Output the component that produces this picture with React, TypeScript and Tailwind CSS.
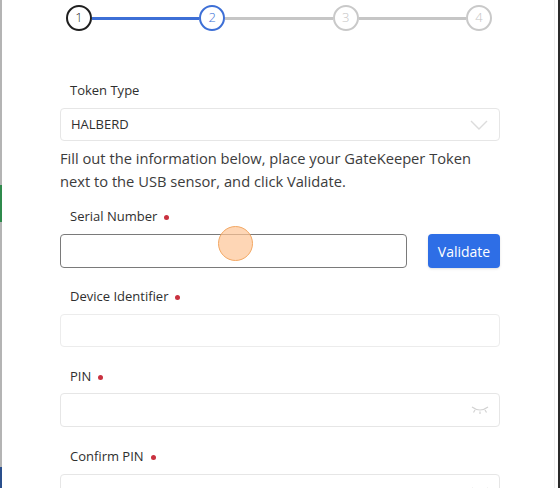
import React from 'react';

const font = { fontFamily: '"Open Sans", "Noto Sans", sans-serif' };

const Step = ({ n, state }: { n: number; state: 'done' | 'active' | 'todo' }) => {
  const ring =
    state === 'done'
      ? 'border-[#1f1f1f] text-[#2a2a2a]'
      : state === 'active'
      ? 'border-[#3d6fd6] text-[#3d6fd6]'
      : 'border-[#c9c9c9] text-[#c4c4c4]';
  return (
    <div
      className={`w-[26px] h-[26px] shrink-0 rounded-full border-2 bg-white flex items-center justify-center text-[13px] font-light ${ring}`}
    >
      {n}
    </div>
  );
};

const Line = ({ blue }: { blue?: boolean }) => (
  <div className={`flex-1 h-[3px] ${blue ? 'bg-[#3d6fd6]' : 'bg-[#c6c6c6]'}`} />
);

const Label = ({ text, required }: { text: string; required?: boolean }) => (
  <div className="h-5 flex items-center pl-[10px] text-[13px] text-[#2f2f2f] gap-[7px]">
    <span>{text}</span>
    {required && <span className="w-[5px] h-[5px] rounded-full bg-[#c9313f]" />}
  </div>
);

const ChevronDown = () => (
  <svg width="20" height="12" viewBox="0 0 20 12" fill="none">
    <path d="M2 2 L10 10 L18 2" stroke="#dcdcdc" strokeWidth="1.4" />
  </svg>
);

const EyeClosed = () => (
  <svg width="18" height="10" viewBox="0 0 18 10" fill="none" stroke="#d2d2d2" strokeWidth="1.2">
    <path d="M1 2 Q9 8 17 2" />
    <path d="M4 5 L2.5 7.5" />
    <path d="M9 6.5 L9 9" />
    <path d="M14 5 L15.5 7.5" />
  </svg>
);

export default function App() {
  return (
    <div className="w-[560px] h-[488px] bg-white flex overflow-hidden" style={font}>
      {/* left window edge */}
      <div className="w-[2px] h-full flex flex-col bg-[#b4b4b4]">
        <div className="h-[185px]" />
        <div className="h-[37px] bg-[#2f8a4c]" />
        <div className="flex-1" />
        <div className="h-[21px] bg-[#2a4f8c]" />
      </div>

      <div className="flex-1 flex flex-col">
        {/* stepper */}
        <div className="flex items-center pl-[64px] pr-[62px] pt-[5px]">
          <Step n={1} state="done" />
          <Line blue />
          <Step n={2} state="active" />
          <Line />
          <Step n={3} state="todo" />
          <Line />
          <Step n={4} state="todo" />
        </div>

        <div className="pl-[58px] pr-[54px] pt-[50px] flex flex-col">
          <Label text="Token Type" />
          <div className="mt-[7px] h-[33px] rounded-[4px] border border-[#e6e6e6] flex items-center justify-between pl-[10px] pr-[10px]">
            <span className="text-[13px] text-[#2f2f2f]">HALBERD</span>
            <ChevronDown />
          </div>

          <p className="mt-[6px] text-[14.7px] leading-[23px] text-[#3c3c3c]">
            Fill out the information below, place your GateKeeper Token next to the USB sensor, and click Validate.
          </p>

          <div className="mt-[14px]">
            <Label text="Serial Number" required />
          </div>
          <div className="mt-[7px] flex gap-[21px]">
            <div className="relative flex-1 h-[34px] rounded-[4px] border border-[#7a7a7a]">
              <div className="absolute left-[157px] top-[-9px] w-[35px] h-[35px] rounded-full bg-[#fdc596]/70 border border-[#f3a864]" />
            </div>
            <button className="w-[72px] h-[34px] rounded-[4px] bg-[#2e6ee6] text-white text-[14px] shadow-sm">
              Validate
            </button>
          </div>

          <div className="mt-[19px]">
            <Label text="Device Identifier" required />
          </div>
          <div className="mt-[7px] h-[33px] rounded-[4px] border border-[#ececec]" />

          <div className="mt-[20px]">
            <Label text="PIN" required />
          </div>
          <div className="mt-[6px] h-[34px] rounded-[4px] border border-[#e6e6e6] flex items-center justify-end pr-[10px]">
            <EyeClosed />
          </div>

          <div className="mt-[20px]">
            <Label text="Confirm PIN" required />
          </div>
          <div className="mt-[7px] h-[34px] rounded-[4px] border border-[#e6e6e6] flex items-center justify-end pr-[10px]">
            <EyeClosed />
          </div>
        </div>
      </div>

      {/* right window edge */}
      <div className="w-[1px] h-full bg-[#efefef] mr-[3px]" />
      <div className="w-[2px] h-full bg-[#2a2a2a]" />
    </div>
  );
}
